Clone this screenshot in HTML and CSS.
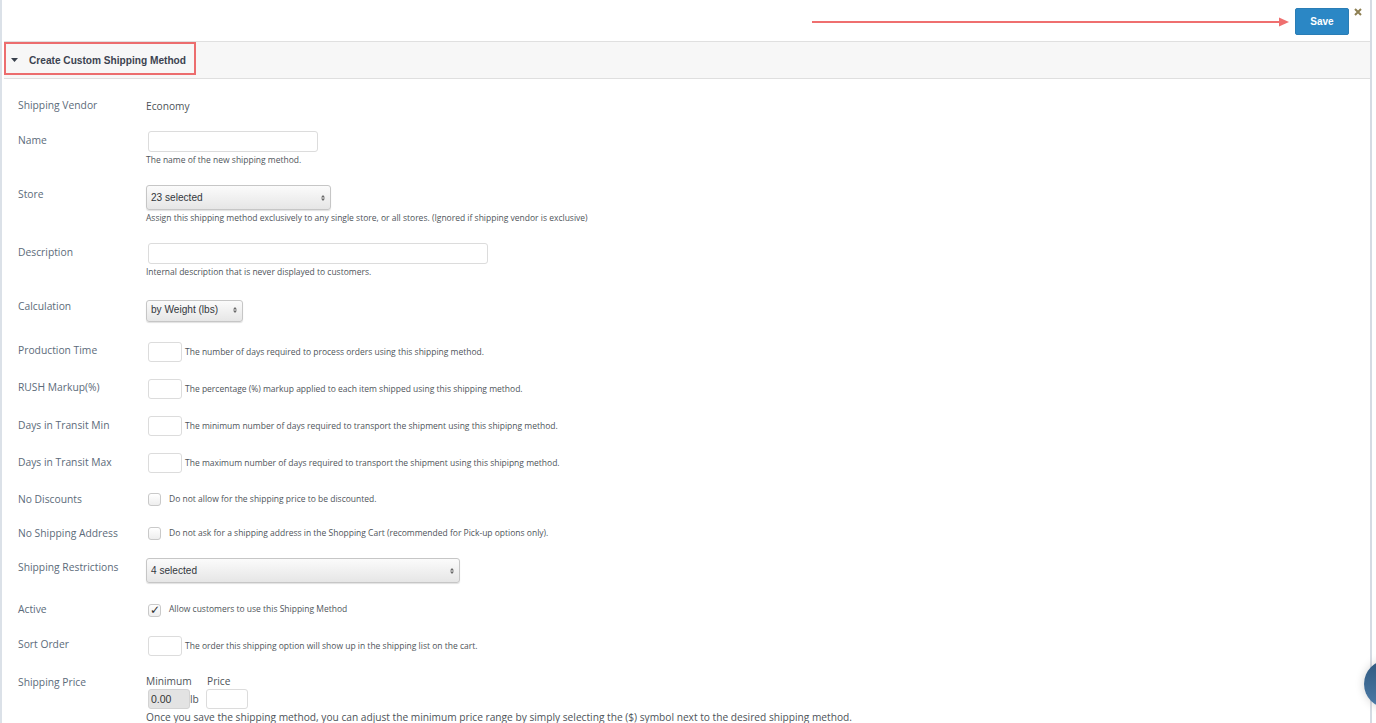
FILE: index.html
```html
<!DOCTYPE html>
<html lang="en">
<head>
<meta charset="utf-8">
<title>Create Custom Shipping Method</title>
<link rel="stylesheet" href="styles.css">
</head>
<body>
<div class="frame">
  <div class="topbar">
    <button class="save" type="button">Save</button>
    <svg class="close" width="8" height="8" viewBox="0 0 8 8" role="img" aria-label="Close"><path d="M1 1l6 6M7 1L1 7" stroke="#8d7f52" stroke-width="2"/></svg>
  </div>
  <div class="panel-head">
    <svg class="caret" width="7" height="4" viewBox="0 0 7 4"><path d="M0 0h7L3.500 4z" fill="#39404c"/></svg>
    <h1 class="panel-title">Create Custom Shipping Method</h1>
  </div>
  <form class="form">
    <div class="row r-vendor">
      <span class="label">Shipping Vendor</span>
      <div class="field"><span class="value">Economy</span></div>
    </div>
    <div class="row r-name">
      <label class="label pt2">Name</label>
      <div class="field">
        <input class="input w-name" type="text">
        <p class="hint">The name of the new shipping method.</p>
      </div>
    </div>
    <div class="row r-store">
      <label class="label pt2">Store</label>
      <div class="field">
        <div class="select w-store">23 selected<svg class="updown" width="4" height="6" viewBox="0 0 4 6"><path d="M2 0l2 2.500H0zM2 6L0 3.500h4z" fill="#666"/></svg></div>
        <p class="hint">Assign this shipping method exclusively to any single store, or all stores. (Ignored if shipping vendor is exclusive)</p>
      </div>
    </div>
    <div class="row r-desc">
      <label class="label pt2">Description</label>
      <div class="field">
        <input class="input w-desc" type="text">
        <p class="hint">Internal description that is never displayed to customers.</p>
      </div>
    </div>
    <div class="row r-calc">
      <label class="label">Calculation</label>
      <div class="field">
        <div class="select w-calc">by Weight (lbs)<svg class="updown" width="4" height="6" viewBox="0 0 4 6"><path d="M2 0l2 2.500H0zM2 6L0 3.500h4z" fill="#666"/></svg></div>
      </div>
    </div>
    <div class="row r-37">
      <label class="label pt1">Production Time</label>
      <div class="field inline"><input class="input w-num" type="text"><span class="hint">The number of days required to process orders using this shipping method.</span></div>
    </div>
    <div class="row r-37">
      <label class="label pt1">RUSH Markup(%)</label>
      <div class="field inline"><input class="input w-num" type="text"><span class="hint">The percentage (%) markup applied to each item shipped using this shipping method.</span></div>
    </div>
    <div class="row r-37">
      <label class="label pt2">Days in Transit Min</label>
      <div class="field inline"><input class="input w-num" type="text"><span class="hint">The minimum number of days required to transport the shipment using this shipipng method.</span></div>
    </div>
    <div class="row r-38">
      <label class="label pt2">Days in Transit Max</label>
      <div class="field inline"><input class="input w-num" type="text"><span class="hint">The maximum number of days required to transport the shipment using this shipipng method.</span></div>
    </div>
    <div class="row r-34">
      <label class="label">No Discounts</label>
      <div class="field check-row"><input class="check" type="checkbox"><span class="hint">Do not allow for the shipping price to be discounted.</span></div>
    </div>
    <div class="row r-32">
      <label class="label">No Shipping Address</label>
      <div class="field check-row"><input class="check" type="checkbox"><span class="hint">Do not ask for a shipping address in the Shopping Cart (recommended for Pick-up options only).</span></div>
    </div>
    <div class="row r-restrict">
      <label class="label pt2">Shipping Restrictions</label>
      <div class="field">
        <div class="select w-restrict">4 selected<svg class="updown" width="4" height="6" viewBox="0 0 4 6"><path d="M2 0l2 2.500H0zM2 6L0 3.500h4z" fill="#666"/></svg></div>
      </div>
    </div>
    <div class="row r-active">
      <label class="label">Active</label>
      <div class="field check-row"><input class="check check-low" type="checkbox" checked><span class="hint">Allow customers to use this Shipping Method</span></div>
    </div>
    <div class="row r-sort">
      <label class="label pt1">Sort Order</label>
      <div class="field inline"><input class="input w-num" type="text"><span class="hint">The order this shipping option will show up in the shipping list on the cart.</span></div>
    </div>
    <div class="row">
      <label class="label pt1">Shipping Price</label>
      <div class="field">
        <div class="price-heads"><span class="price-min">Minimum</span><span>Price</span></div>
        <div class="price-inputs">
          <input class="input w-min" type="text" value="0.00" readonly>
          <span class="unit">lb</span>
          <input class="input w-price" type="text">
        </div>
        <p class="note">Once you save the shipping method, you can adjust the minimum price range by simply selecting the ($) symbol next to the desired shipping method.</p>
      </div>
    </div>
  </form>
</div>

<!-- Annotation marks over the screenshot -->
<div class="mark-box"></div>
<svg class="mark-arrow" width="478" height="12" viewBox="0 0 478 12"><path d="M0 6H468" stroke="#ef6f6f" stroke-width="2"/><path d="M467 1.500L477 6l-10 4.500z" fill="#ef6f6f"/></svg>
<div class="chat-bubble"></div>
</body>
</html>
```
FILE: styles.css
```css
* { box-sizing: border-box; }
html, body { margin: 0; height: 100%; overflow: hidden; background: #fff; }
body { font-family: "Open Sans", "Liberation Sans", sans-serif; color: #4a5560; }

.frame {
  width: 1372px;
  height: 723px;
  border-left: 2px solid #dbe1e8;
  border-right: 2px solid #d5dbe3;
  overflow: hidden;
}

.topbar {
  height: 41px;
  display: flex;
  align-items: flex-start;
  justify-content: flex-end;
  padding-top: 8px;
}
.save {
  width: 54px;
  height: 27px;
  margin: 0 5px 0 0;
  padding: 0;
  border: 1px solid #2a7db5;
  border-radius: 2px;
  background: #2b87c5;
  color: #fff;
  font: bold 10px "Liberation Sans", sans-serif;
}
.close {
  margin: 0 8px 0 0;
  flex: none;
}

.panel-head {
  height: 38px;
  margin-left: 2px;
  display: flex;
  align-items: center;
  padding-left: 7px;
  background: #f7f7f7;
  border-top: 1px solid #e0e0e0;
  border-bottom: 1px solid #dfdfdf;
}
.caret { margin-right: 11px; }
.panel-title {
  margin: 0;
  font: bold 10.150px "Liberation Sans", sans-serif;
  color: #3c4350;
}

.form { padding: 19px 0 0 16px; }

.row {
  display: grid;
  grid-template-columns: 128px 1fr;
  align-items: start;
}
.r-vendor { height: 33px; }
.r-name { height: 54px; }
.r-store { height: 58px; }
.r-desc { height: 56px; }
.r-calc { height: 43px; }
.r-37 { height: 37px; }
.r-38 { height: 39px; }
.r-34 { height: 34px; }
.r-32 { height: 32px; }
.r-restrict { height: 44px; }
.r-active { height: 34px; }
.r-sort { height: 38px; }

.label {
  font-size: 10.300px;
  line-height: 14px;
  color: #5c6b7a;
  white-space: nowrap;
}
.pt1 { padding-top: 1px; }
.pt2 { padding-top: 2px; }

.value {
  display: block;
  padding-top: 1px;
  font-size: 10.200px;
  line-height: 14px;
  color: #4d5358;
}

.input {
  display: block;
  margin: 0 0 0 2px;
  padding: 0 2px;
  height: 21px;
  background: #fff;
  border: 1px solid #dcdcdc;
  border-radius: 3px;
  font: 10.500px "Liberation Sans", sans-serif;
  color: #333;
}
.w-name { width: 170px; }
.w-desc { width: 340px; }
.w-num { width: 34px; height: 20px; flex: none; }
.w-min {
  width: 42px;
  height: 20px;
  background: #e3e3e3;
  border-color: #d3d3d3;
  font-size: 10.500px;
  color: #333;
}
.w-price { width: 42px; height: 20px; margin: 0; }

.select {
  display: flex;
  align-items: center;
  justify-content: space-between;
  padding: 0 5px 1px 4px;
  background: linear-gradient(#fbfbfb, #e6e6e6);
  border: 1px solid #c6c6c6;
  border-radius: 3px;
  box-shadow: 0 1px 1px rgba(0, 0, 0, .12);
  font: 10.100px "Liberation Sans", sans-serif;
  color: #33383d;
}
.updown { flex: none; margin-top: 1px; }
.w-store { width: 185px; height: 25px; }
.w-calc { width: 97px; height: 22px; margin-top: 1px; padding-bottom: 3px; }
.w-restrict { width: 314px; height: 25px; padding-bottom: 0; }

.hint {
  margin: 0;
  font-size: 8.500px;
  line-height: 14px;
  color: #4f555b;
  white-space: nowrap;
}
.field > p.hint { display: block; margin-top: 1px; }

.inline { display: flex; align-items: center; }
.inline .hint { margin-left: 3px; }

.check-row { display: flex; align-items: flex-start; }
.check {
  appearance: none;
  position: relative;
  flex: none;
  width: 13px;
  height: 13px;
  margin: 1px 8px 0 2px;
  background: linear-gradient(#fff, #eee);
  border: 1px solid #c9c9c9;
  border-radius: 3px;
}
.check-low { margin-top: 2px; }
.check:checked::after {
  content: "\2713";
  position: absolute;
  left: 1px;
  top: -1px;
  font: 12px/13px "DejaVu Sans", sans-serif;
  color: #2f2f2f;
}

.price-heads {
  display: flex;
  font-size: 10.200px;
  line-height: 14px;
  color: #4d5358;
}
.price-min { width: 61px; }
.price-inputs { display: flex; align-items: center; margin-top: 1px; }
.unit { width: 16px; font-size: 10.200px; color: #4d5358; }
.note {
  margin: 1px 0 0;
  font-size: 10.190px;
  line-height: 14px;
  color: #4d5358;
  white-space: nowrap;
}

/* Annotations and floating widget */
.mark-box {
  position: absolute;
  left: 4px;
  top: 42px;
  width: 192px;
  height: 33px;
  border: 2px solid #ec6d6e;
}
.mark-arrow {
  position: absolute;
  left: 812px;
  top: 16px;
}
.chat-bubble {
  position: fixed;
  left: 1364px;
  top: 660px;
  width: 48px;
  height: 48px;
  border-radius: 50%;
  background: linear-gradient(#2f587f, #4d7ca8);
  box-shadow: 0 0 10px rgba(0, 0, 0, .18);
}
```
